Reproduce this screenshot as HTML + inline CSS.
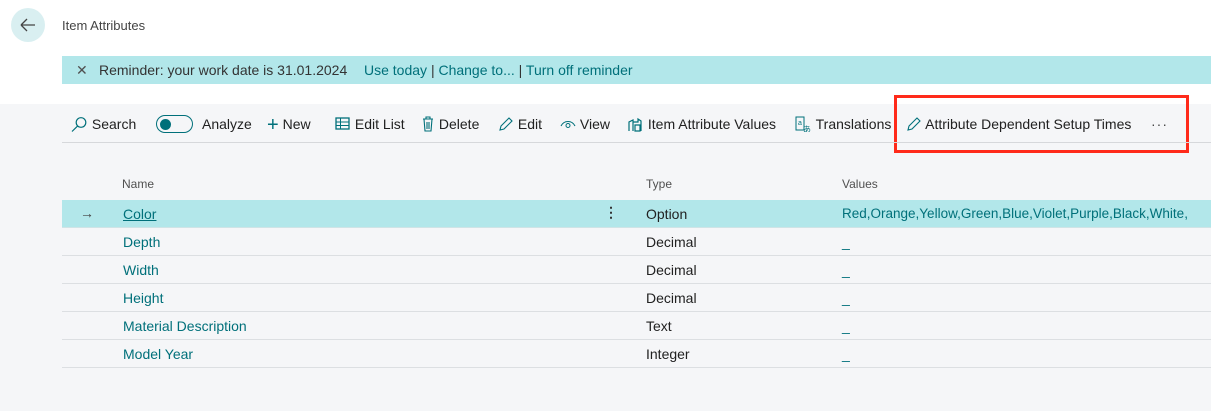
<!DOCTYPE html>
<html><head><meta charset="utf-8"><style>
*{margin:0;padding:0;box-sizing:border-box}
body{width:1211px;height:411px;overflow:hidden;background:#f5f6f8;font-family:"Segoe UI","Liberation Sans",sans-serif;font-size:14px;color:#212121;position:relative}
.top{position:absolute;left:0;top:0;width:1211px;height:104px;background:#fff}
.a{position:absolute;white-space:nowrap}
.back{left:11px;top:8px;width:34px;height:34px;border-radius:50%;background:#d9eff1}
.banner{left:62px;top:56px;width:1149px;height:28px;background:#b2e7ea}
.tl{color:#00707a}
.tb{top:116px;font-size:14px}
.ic{color:#00707a}
.hr{position:absolute;height:1px;background:#d6d8db}
.hd{top:177px;font-size:12px;color:#505050}
.row{position:absolute;left:62px;width:1149px;height:28px;border-bottom:1px solid #dcdfe2}
.nm{color:#00707a}
</style></head><body>
<div class="top"></div>
<div class="a back"><svg width="34" height="34"><path d="M10 17h14M10 17l6-6M10 17l6 6" stroke="#444" stroke-width="1.3" fill="none"/></svg></div>
<div class="a" style="left:62px;top:18px;font-size:13px;color:#444">Item Attributes</div>
<div class="a banner"></div>
<div class="a" style="left:76px;top:62px;font-size:14px"><span style="color:#505050">✕</span></div>
<div class="a" style="left:99px;top:62px;color:#333">Reminder: your work date is 31.01.2024</div>
<div class="a tl" style="left:364px;top:62px">Use today <span style="color:#333">|</span> Change to... <span style="color:#333">|</span> Turn off reminder</div>

<div class="a tb" style="left:70px"><svg width="18" height="16" style="vertical-align:-3px"><circle cx="11" cy="6.5" r="4.8" stroke="#00707a" stroke-width="1.2" fill="none"/><path d="M7.6 10L2 15.5" stroke="#00707a" stroke-width="1.2"/></svg> Search</div>
<div class="a" style="left:156px;top:115px;width:37px;height:18px;border:1.5px solid #00707a;border-radius:9px"><div style="position:absolute;left:3px;top:2.5px;width:11px;height:11px;border-radius:50%;background:#00707a"></div></div>
<div class="a tb" style="left:202px">Analyze</div>
<div class="a tb" style="left:267px"><span class="ic" style="font-size:20px;line-height:14px;vertical-align:-2px">+</span> New</div>
<div class="a tb" style="left:335px"><svg width="16" height="14" style="vertical-align:-2px"><rect x="1" y="1" width="13" height="11" fill="none" stroke="#00707a" stroke-width="1.3"/><path d="M1 5h13M1 8.5h13M5.5 1v11" stroke="#00707a"/></svg> Edit List</div>
<div class="a tb" style="left:421px"><svg width="14" height="16" style="vertical-align:-3px"><path d="M2 3h10M5 3V1h4v2M3 3l1 12h6l1-12M6 6v7M8 6v7" stroke="#00707a" fill="none" stroke-width="1.1"/></svg> Delete</div>
<div class="a tb" style="left:498px"><svg width="16" height="16" style="vertical-align:-3px"><path d="M2 14l1-4 8-8 3 3-8 8z" stroke="#00707a" fill="none" stroke-width="1.1"/></svg> Edit</div>
<div class="a tb" style="left:560px"><svg width="16" height="14" style="vertical-align:-2px"><path d="M1 9c3-6 11-6 14 0" stroke="#00707a" fill="none" stroke-width="1.1"/><circle cx="8" cy="8.5" r="2" stroke="#00707a" fill="none"/></svg> View</div>
<div class="a tb" style="left:627px"><svg width="17" height="16" style="vertical-align:-3px"><path d="M2 15V6l4-2v11M6 6h5V3l3 2v10M8 9h5v6H8z" stroke="#00707a" fill="none" stroke-width="1.2"/></svg> Item Attribute Values</div>
<div class="a tb" style="left:795px"><svg width="17" height="16" style="vertical-align:-3px"><path d="M1 1h8v13H1z" stroke="#00707a" fill="none"/><text x="3" y="9" font-size="7" fill="#00707a">a</text><text x="8" y="16" font-size="8" fill="#00707a">あ</text></svg> Translations</div>
<div class="a tb" style="left:906px"><svg width="16" height="16" style="vertical-align:-3px"><path d="M2 14l1-4 8-8 3 3-8 8z" stroke="#00707a" fill="none" stroke-width="1.1"/></svg> Attribute Dependent Setup Times</div>
<div class="a tb" style="left:1151px;color:#444;letter-spacing:1px">···</div>
<div class="a" style="left:894px;top:95px;width:295px;height:58px;border:3px solid #ff2a1a"></div>
<div class="hr" style="left:62px;top:142px;width:1149px"></div>

<div class="a hd" style="left:122px">Name</div>
<div class="a hd" style="left:646px">Type</div>
<div class="a hd" style="left:842px">Values</div>

<div class="row" style="top:200px;background:#b2e7ea;border-bottom-color:#cfe4e6"></div>
<div class="row" style="top:228px"></div>
<div class="row" style="top:256px"></div>
<div class="row" style="top:284px"></div>
<div class="row" style="top:312px"></div>
<div class="row" style="top:340px"></div>

<div class="a" style="left:80px;top:205px;color:#444">→</div>
<div class="a nm" style="left:123px;top:206px;text-decoration:underline">Color</div>
<div class="a" style="left:604px;top:204px;font-weight:bold;color:#333">⋮</div>
<div class="a" style="left:646px;top:206px">Option</div>
<div class="a nm" style="left:842px;top:206px;font-size:13.5px">Red,Orange,Yellow,Green,Blue,Violet,Purple,Black,White,</div>

<div class="a nm" style="left:123px;top:234px">Depth</div><div class="a" style="left:646px;top:234px">Decimal</div><div class="a nm" style="left:842px;top:234px">_</div>
<div class="a nm" style="left:123px;top:262px">Width</div><div class="a" style="left:646px;top:262px">Decimal</div><div class="a nm" style="left:842px;top:262px">_</div>
<div class="a nm" style="left:123px;top:290px">Height</div><div class="a" style="left:646px;top:290px">Decimal</div><div class="a nm" style="left:842px;top:290px">_</div>
<div class="a nm" style="left:123px;top:318px">Material Description</div><div class="a" style="left:646px;top:318px">Text</div><div class="a nm" style="left:842px;top:318px">_</div>
<div class="a nm" style="left:123px;top:346px">Model Year</div><div class="a" style="left:646px;top:346px">Integer</div><div class="a nm" style="left:842px;top:346px">_</div>
</body></html>
